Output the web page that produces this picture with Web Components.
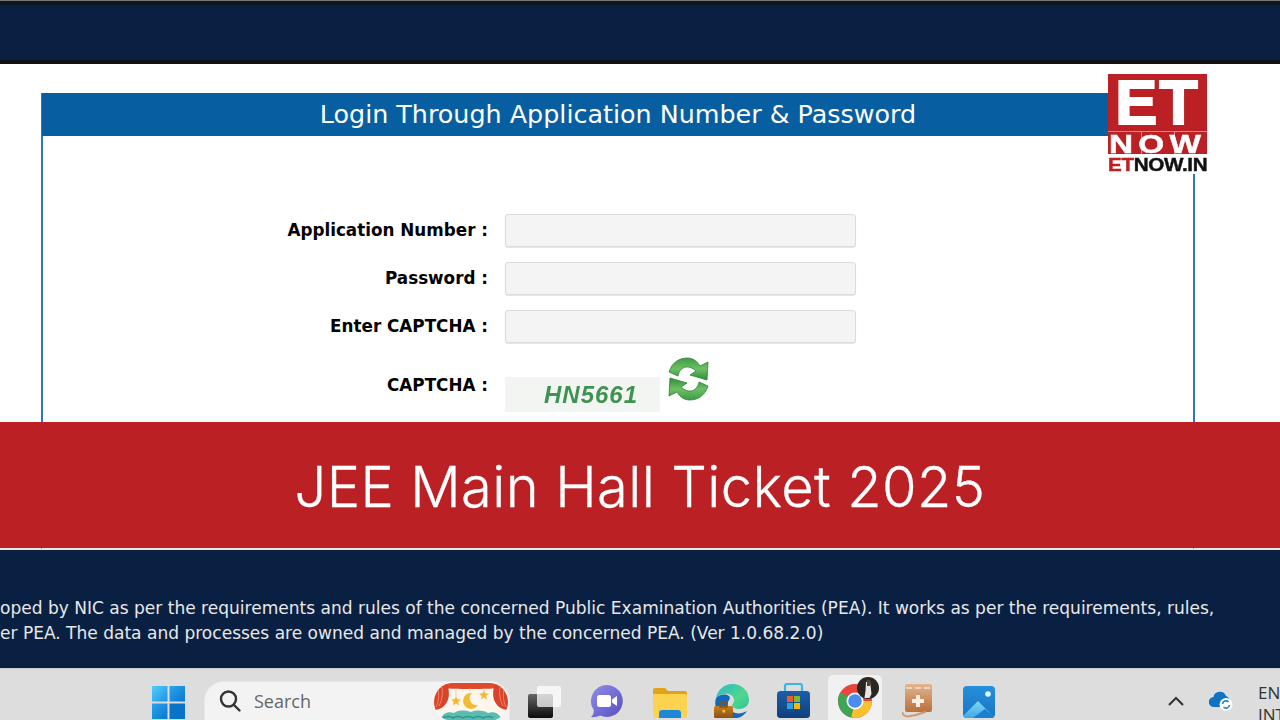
<!DOCTYPE html>
<html lang="en">
<head>
<meta charset="utf-8">
<title>JEE Main Hall Ticket 2025</title>
<style>
html, body { margin: 0; height: 100%; background: #fff; }
body { width: 1280px; height: 720px; overflow: hidden; display: flex; flex-direction: column; position: relative; font-family: "DejaVu Sans", sans-serif; }
</style>
</head>
<body>
<top-band></top-band>
<login-area>
    <form-row label="Application Number :"></form-row>
    <form-row label="Password :"></form-row>
    <form-row label="Enter CAPTCHA :"></form-row>
    <captcha-row label="CAPTCHA :" code="HN5661"></captcha-row>
</login-area>
<title-banner>JEE Main Hall Ticket 2025</title-banner>
<notice-footer>
    <div>oped by NIC as per the requirements and rules of the concerned Public Examination Authorities (PEA). It works as per the requirements, rules,</div>
    <div>er PEA. The data and processes are owned and managed by the concerned PEA. (Ver 1.0.68.2.0)</div>
</notice-footer>
<win-taskbar></win-taskbar>
<et-logo></et-logo>

<script>
class TopBand extends HTMLElement {
    constructor() {
        super();
        this.attachShadow({ mode: "open" }).innerHTML = `
<style>
:host { display: block; height: 64px; box-sizing: border-box; flex: none; background: #0a2043; border-top: 1px solid #777; border-bottom: 4px solid #111; box-shadow: inset 0 4px 0 #10161f; }
</style>`;
    }
}

class LoginArea extends HTMLElement {
    constructor() {
        super();
        this.attachShadow({ mode: "open" }).innerHTML = `
<style>
:host { display: block; height: 358px; flex: none; overflow: hidden; background: #fff; padding: 29px 85px 0 41px; box-sizing: border-box; }
#card { border: solid #2a78ba; border-width: 0 2px; height: 500px; }
h1 { margin: 0 -1px; height: 43px; background: #075fa2; color: #fff; font: 400 25.400px/43px "DejaVu Sans", sans-serif; text-align: center; }
#body { padding-top: 78px; display: flex; flex-direction: column; gap: 15px; }
</style>
<div id="card">
    <h1>Login Through Application Number &amp; Password</h1>
    <div id="body"><slot></slot></div>
</div>`;
    }
}

class FormRow extends HTMLElement {
    constructor() {
        super();
        this.attachShadow({ mode: "open" }).innerHTML = `
<style>
:host { display: flex; align-items: center; gap: 17px; height: 33px; }
label { width: 445px; text-align: right; color: #000; font: 700 16.800px "DejaVu Sans", sans-serif; margin-top: -2px; }
input { width: 351px; height: 33px; box-sizing: border-box; margin: 0; background: #f4f4f4; border: 1px solid #dcdcdc; border-radius: 3px; box-shadow: 0 1px 1px #e4e4e4; }
</style>
<label></label><input type="text">`;
    }

    connectedCallback() {
        this.shadowRoot.querySelector("label").textContent = this.getAttribute("label");
    }
}

class CaptchaRow extends HTMLElement {
    constructor() {
        super();
        this.attachShadow({ mode: "open" }).innerHTML = `
<style>
:host { display: flex; align-items: center; gap: 17px; height: 55px; margin-top: -1px; }
label { width: 445px; text-align: right; color: #000; font: 700 16.800px "DejaVu Sans", sans-serif; }
#code { align-self: flex-end; width: 155px; height: 35px; box-sizing: border-box; background: #f3f5f2; color: #3f9350; font: italic 700 24px/36px "Liberation Sans", sans-serif; letter-spacing: 1px; padding-left: 39px; filter: blur(.6px); }
svg { align-self: flex-start; margin-left: -10px; }
</style>
<label></label>
<div id="code"></div>
<svg width="44" height="44" viewBox="0 0 44 44">
    <defs>
        <linearGradient id="g" x1="0" y1="0" x2="0" y2="1"><stop offset="0" stop-color="#3f9a45"/><stop offset=".5" stop-color="#6cc063"/><stop offset="1" stop-color="#2f8a3a"/></linearGradient>
    </defs>
    <path fill="url(#g)" stroke="#2c8438" stroke-width=".8" d="M2 15C5 5 13 1 20 1C26 1 30 4 33 9L41 5L40 23L23 18L29 14C26 11 22 9.500 19 10C15 10.500 12 14 11 19Z"/>
    <path fill="url(#g)" stroke="#2c8438" stroke-width=".8" transform="rotate(180 21.500 22)" d="M2 15C5 5 13 1 20 1C26 1 30 4 33 9L41 5L40 23L23 18L29 14C26 11 22 9.500 19 10C15 10.500 12 14 11 19Z"/>
</svg>`;
    }

    connectedCallback() {
        this.shadowRoot.querySelector("label").textContent = this.getAttribute("label");
        this.shadowRoot.getElementById("code").textContent = this.getAttribute("code");
    }
}

class TitleBanner extends HTMLElement {
    constructor() {
        super();
        this.attachShadow({ mode: "open" }).innerHTML = `
<style>
:host { display: block; height: 126px; flex: none; background: #bb2124; color: #fff; text-align: center; font: 300 56px/130px "Inter", sans-serif; letter-spacing: .4px; -webkit-text-stroke: .3px #fff; }
</style>
<slot></slot>`;
    }
}

class NoticeFooter extends HTMLElement {
    constructor() {
        super();
        this.attachShadow({ mode: "open" }).innerHTML = `
<style>
:host {
    display: block; height: 120px; flex: none; box-sizing: border-box; padding-top: 48px;
    background: linear-gradient(#8a94a8, #8a94a8) 41px 0 / 1px 1px no-repeat, linear-gradient(#8a94a8, #8a94a8) 1193px 0 / 1px 1px no-repeat, linear-gradient(#e6e6e6, #e6e6e6) 0 0 / 100% 2px no-repeat, #0a2043;
    color: #e8e8e8; font: 400 17.050px/25px "DejaVu Sans", sans-serif; white-space: nowrap; overflow: hidden;
}
</style>
<slot></slot>`;
    }
}

class EtLogo extends HTMLElement {
    constructor() {
        super();
        this.attachShadow({ mode: "open" }).innerHTML = `
<style>
:host { position: absolute; left: 1108px; top: 74px; width: 99px; display: flex; flex-direction: column; background: #fff; font-family: "Liberation Sans", sans-serif; font-weight: 700; }
#box { background: #bb2124; color: #fff; height: 80px; display: flex; flex-direction: column; }
#et { height: 57px; font-size: 63px; line-height: 57px; text-align: center; letter-spacing: 2px; -webkit-text-stroke: 2px #fff; }
#now { height: 23px; box-sizing: border-box; text-align: center; font-size: 25px; line-height: 24px; letter-spacing: 4px; border-top: 1px solid #d98a8c; -webkit-text-stroke: .5px #fff; background: linear-gradient(#d98a8c, #d98a8c) 33px 0 / 1px 100% no-repeat, linear-gradient(#d98a8c, #d98a8c) 66px 0 / 1px 100% no-repeat; }
#now span { display: inline-block; transform: scaleX(1.33); }
#site { height: 18px; margin-top: 2px; color: #111; font-size: 17.500px; line-height: 18px; white-space: nowrap; letter-spacing: -.3px; transform: scaleX(1.18); transform-origin: 0 0; -webkit-text-stroke: .4px; }
#site b { color: #bb2124; }
</style>
<div id="box">
    <div id="et">ET</div>
    <div id="now"><span>NOW</span></div>
</div>
<div id="site"><b>ET</b>NOW.IN</div>`;
    }
}

class TaskIcon extends HTMLElement {
    constructor() {
        super();
        this.attachShadow({ mode: "open" }).innerHTML = `
<style>
:host { display: flex; justify-content: center; align-items: flex-end; width: 62px; height: 45px; box-sizing: border-box; padding-bottom: 2px; }
:host([active]) { width: 54px; margin: 0 4px; padding-bottom: 0; background: #f1f1f1; border-radius: 5px 5px 0 0; }
</style>
<slot></slot>`;
    }
}

class WinTaskbar extends HTMLElement {
    constructor() {
        super();
        this.attachShadow({ mode: "open" }).innerHTML = `
<style>
:host { display: flex; flex: 1; align-items: flex-end; background: #dddddd; border-top: 1px solid #c9c9c9; padding-left: 152px; overflow: hidden; }
#start { align-self: flex-end; margin-bottom: 1px; margin-right: 19px; }
#search { width: 306px; height: 39px; margin-right: 4px; box-sizing: border-box; background: #f3f3f3; border: 1px solid #e9e9e9; border-bottom: 0; border-radius: 20px 20px 0 0 / 20px 20px 0 0; display: flex; align-items: center; padding-left: 13px; gap: 12px; color: #666; font: 400 18px "Open Sans", sans-serif; position: relative; }
#theme { position: absolute; right: 1px; top: 1px; }
#tray { margin-left: auto; display: flex; align-items: center; height: 52px; box-sizing: border-box; padding-top: 14px; color: #333; width: 112px; flex: none; }
#tray > * { flex: none; }
#lang { font: 400 17px/22px "Open Sans", sans-serif; margin: 5px 0 0 25px; white-space: nowrap; }
#chev { margin-right: 25px; }
</style>
<svg id="start" width="33" height="33" viewBox="0 0 33 33">
    <defs>
        <linearGradient id="w1" x1="0" y1="0" x2="1" y2="1"><stop offset="0" stop-color="#55cdfb"/><stop offset="1" stop-color="#1b93e4"/></linearGradient>
        <linearGradient id="w2" x1="0" y1="0" x2="1" y2="1"><stop offset="0" stop-color="#2aa4ec"/><stop offset="1" stop-color="#0a78d0"/></linearGradient>
    </defs>
    <rect width="15.500" height="15.500" fill="url(#w1)"/>
    <rect x="17.500" width="15.500" height="15.500" fill="url(#w2)"/>
    <rect y="17.500" width="15.500" height="15.500" fill="url(#w2)"/>
    <rect x="17.500" y="17.500" width="15.500" height="15.500" fill="#0a72c8"/>
</svg>
<div id="search">
    <svg width="24" height="24" viewBox="0 0 24 24" fill="none" stroke="#333" stroke-width="2.400" stroke-linecap="round"><circle cx="10.500" cy="10" r="7.500"/><path d="M16 16l5.500 5.500"/></svg>
    <span>Search</span>
    <svg id="theme" width="74" height="38" viewBox="0 0 74 38">
        <defs>
            <clipPath id="pill"><rect width="74" height="38" rx="19"/></clipPath>
            <path id="star" d="M0-5l1.400 3.300 3.500.3-2.700 2.300.8 3.500L0 2.500l-3 1.900.8-3.500-2.700-2.300 3.500-.3z" fill="#f3bb33"/>
        </defs>
        <g clip-path="url(#pill)">
            <rect width="74" height="38" fill="#fdf6ee"/>
            <path d="M0 0h74v3C64 6 48 6 37 6S10 6 0 3z" fill="#e0492a"/>
            <path d="M0 0h13c3 9 3 18-4 24-3 2-6 3-9 3z" fill="#d8432a"/>
            <path d="M74 0H61c-3 9-3 18 4 24 3 2 6 3 9 3z" fill="#d8432a"/>
            <path d="M4 4c1 8 1 14-2 20M8 4c1 7 0 13-3 19M70 4c-1 8-1 14 2 20M66 4c-1 7 0 13 3 19" stroke="#f2866a" stroke-width="1" fill="none"/>
            <path d="M22 5v8M50 5v2M36 5v4" stroke="#d9b98a" stroke-width=".6"/>
            <path d="M6 38c2-8 8-10 14-8 5-3 9-3 17-1 6-2 11-2 17 1 6-2 12 0 14 8z" fill="#5bbcb2"/>
            <path d="M9 35c4-2 7-2 10 0 4-2 7-2 10 0 4-2 7-2 10 0 4-2 7-2 10 0 4-2 7-2 10 0" stroke="#2f938c" stroke-width="1.500" fill="none"/>
            <path d="M38 10a8 8 0 1 0 6 12 7 7 0 0 1-6-12z" fill="#f3bb33"/>
            <use href="#star" x="22" y="18"/>
            <use href="#star" x="50" y="12"/>
        </g>
    </svg>
</div>
<task-icon>
    <svg width="34" height="32" viewBox="0 0 34 32">
        <defs><linearGradient id="tv" x1="0" y1="0" x2="0" y2="1"><stop offset="0" stop-color="#666"/><stop offset="1" stop-color="#0c0c0c"/></linearGradient></defs>
        <rect x="0" y="8" width="25" height="24" rx="2" fill="url(#tv)"/>
        <rect x="9" y="0" width="24" height="21" rx="2" fill="#fff" fill-opacity=".72"/>
    </svg>
</task-icon>
<task-icon>
    <svg width="34" height="34" viewBox="0 0 34 34">
        <defs><linearGradient id="mt" x1="0" y1="0" x2="1" y2="1"><stop offset="0" stop-color="#8d8de8"/><stop offset="1" stop-color="#5a4fc4"/></linearGradient></defs>
        <path d="M17 1a16 16 0 1 1-7 30.500C7 33 3 33.500 1 33c2-2 3-4 2.800-7A16 16 0 0 1 17 1z" fill="url(#mt)"/>
        <rect x="7" y="11" width="14" height="12" rx="2.500" fill="#fff"/>
        <path d="M22 15.500l5-3.500v10l-5-3.500z" fill="#fff"/>
    </svg>
</task-icon>
<task-icon>
    <svg width="35" height="31" viewBox="0 0 35 31">
        <path d="M1 3a2 2 0 0 1 2-2h10l3 3h17a2 2 0 0 1 2 2v6H1z" fill="#e0a21b"/>
        <path d="M1 7h32a2 2 0 0 1 2 2v20a2 2 0 0 1-2 2H3a2 2 0 0 1-2-2z" fill="#fcd34f"/>
        <path d="M7 31v-5a3 3 0 0 1 3-3h16a3 3 0 0 1 3 3v5z" fill="#1f88d6"/>
    </svg>
</task-icon>
<task-icon>
    <svg width="35" height="34" viewBox="0 0 35 34">
        <defs>
            <linearGradient id="eg" x1="0" y1="0" x2="1" y2="1"><stop offset="0" stop-color="#2cb8c8"/><stop offset=".6" stop-color="#4fd88c"/><stop offset="1" stop-color="#2fc39a"/></linearGradient>
            <linearGradient id="sc" x1="0" y1="0" x2="0" y2="1"><stop offset="0" stop-color="#c9801f"/><stop offset="1" stop-color="#8a5212"/></linearGradient>
        </defs>
        <path d="M2 14C4 5 11 0 18 0c9 0 17 6 17 16 0 6-5 9-10 9-4 0-7-2-7-4 0-1 2-2 2-5 0-4-5-7-10-6-4 1-7 2-8 4z" fill="url(#eg)"/>
        <path d="M2 14c3-3 9-5 13-2 2 2 0 4-1 6l-1 6-11 0C1 21 1 17 2 14z" fill="#1668b8"/>
        <path d="M18 34c7 1 12-2 15-7-5 3-11 3-14 1z" fill="#1668b8"/>
        <rect x="0" y="22" width="19" height="12" rx="1.500" fill="url(#sc)"/>
        <rect x="6" y="19" width="7" height="4" fill="none" stroke="#8a5212" stroke-width="1.500"/>
        <rect x="8.500" y="26" width="2.500" height="2.500" fill="#f0c24a"/>
    </svg>
</task-icon>
<task-icon>
    <svg width="33" height="35" viewBox="0 0 33 35">
        <defs><linearGradient id="st" x1="0" y1="0" x2="0" y2="1"><stop offset="0" stop-color="#1c5fa8"/><stop offset="1" stop-color="#0f3f7c"/></linearGradient></defs>
        <path d="M8 10V3a2 2 0 0 1 2-2h13a2 2 0 0 1 2 2v7" fill="none" stroke="#3ab4ea" stroke-width="2.200"/>
        <rect y="8" width="33" height="27" rx="3.500" fill="url(#st)"/>
        <rect x="10" y="13" width="6" height="6" fill="#f25a2b"/>
        <rect x="17" y="13" width="6" height="6" fill="#7fba2a"/>
        <rect x="10" y="20" width="6" height="6" fill="#1fa6ee"/>
        <rect x="17" y="20" width="6" height="6" fill="#ffb900"/>
    </svg>
</task-icon>
<task-icon active>
    <svg width="48" height="45" viewBox="0 0 48 45">
        <circle cx="24" cy="26" r="17" fill="#e8453c"/>
        <path d="M24 26L41 26A17 17 0 0 1 20 42.500z" fill="#fbc02d"/>
        <path d="M24 26L20 42.500A17 17 0 0 1 9.300 17.500z" fill="#3ba655"/>
        <circle cx="24" cy="26" r="8.500" fill="#fff"/>
        <circle cx="24" cy="26" r="6.800" fill="#4a8cf0"/>
        <circle cx="37" cy="13" r="11" fill="#2a2624"/>
        <path d="M35 7c3-2 5 0 4.500 3l1 9-2 4h-5l1-7z" fill="#e9e6e2"/>
        <path d="M36 5c2-1 4 0 4 3l-1 3h-3z" fill="#5a3c28"/>
    </svg>
</task-icon>
<task-icon>
    <svg width="30" height="35" viewBox="0 0 30 35">
        <defs><linearGradient id="ct" x1="0" y1="0" x2="0" y2="1"><stop offset="0" stop-color="#e2b48f"/><stop offset="1" stop-color="#b9703b"/></linearGradient></defs>
        <rect x="3" y="1" width="27" height="28" rx="2" fill="url(#ct)"/>
        <path d="M4 5h6M13 5h6M22 5h6" stroke="#f5e2d0" stroke-width="1.500"/>
        <path d="M14 12h4v4h4v4h-4v4h-4v-4h-4v-4h4z" fill="#fbeee2"/>
        <path d="M0 29c1 4 5 5 9 4 8-1 12-4 15-4" fill="none" stroke="#d29a6c" stroke-width="2"/>
    </svg>
</task-icon>
<task-icon>
    <svg width="32" height="32" viewBox="0 0 32 32">
        <defs>
            <linearGradient id="ph" x1="0" y1="0" x2="0" y2="1"><stop offset="0" stop-color="#2590dc"/><stop offset="1" stop-color="#1a74c2"/></linearGradient>
            <linearGradient id="pm" x1="0" y1="0" x2="0" y2="1"><stop offset="0" stop-color="#7fd8f4"/><stop offset="1" stop-color="#3fa8e4"/></linearGradient>
            <clipPath id="phc"><rect width="32" height="32" rx="4"/></clipPath>
        </defs>
        <g clip-path="url(#phc)">
            <rect width="32" height="32" fill="url(#ph)"/>
            <circle cx="25" cy="8" r="2.800" fill="#e6f4fd"/>
            <path d="M0 30l15-15 17 17H0z" fill="url(#pm)"/>
            <path d="M10 32l12-9 10 9z" fill="#1c7ed0"/>
        </g>
    </svg>
</task-icon>
<div id="tray">
    <svg id="chev" width="16" height="10" viewBox="0 0 16 10" fill="none" stroke="#333" stroke-width="2"><path d="M1 9l7-7 7 7"/></svg>
    <svg width="24" height="20" viewBox="0 0 24 20">
        <path d="M5 16a5 5 0 0 1-.5-10A6.500 6.500 0 0 1 17 5a4 4 0 0 1 1 7.500L15 16z" fill="#0f72c4"/>
        <circle cx="17" cy="13.500" r="6.500" fill="#fff"/>
        <path d="M13.500 13a3.500 3.500 0 0 1 6-2M20.500 14a3.500 3.500 0 0 1-6 2" fill="none" stroke="#1f7fd0" stroke-width="1.600"/>
    </svg>
    <div id="lang">EN<br>INT</div>
</div>`;
    }
}

window.customElements.define("top-band", TopBand);
window.customElements.define("login-area", LoginArea);
window.customElements.define("form-row", FormRow);
window.customElements.define("captcha-row", CaptchaRow);
window.customElements.define("title-banner", TitleBanner);
window.customElements.define("notice-footer", NoticeFooter);
window.customElements.define("et-logo", EtLogo);
window.customElements.define("task-icon", TaskIcon);
window.customElements.define("win-taskbar", WinTaskbar);
</script>
</body>
</html>
